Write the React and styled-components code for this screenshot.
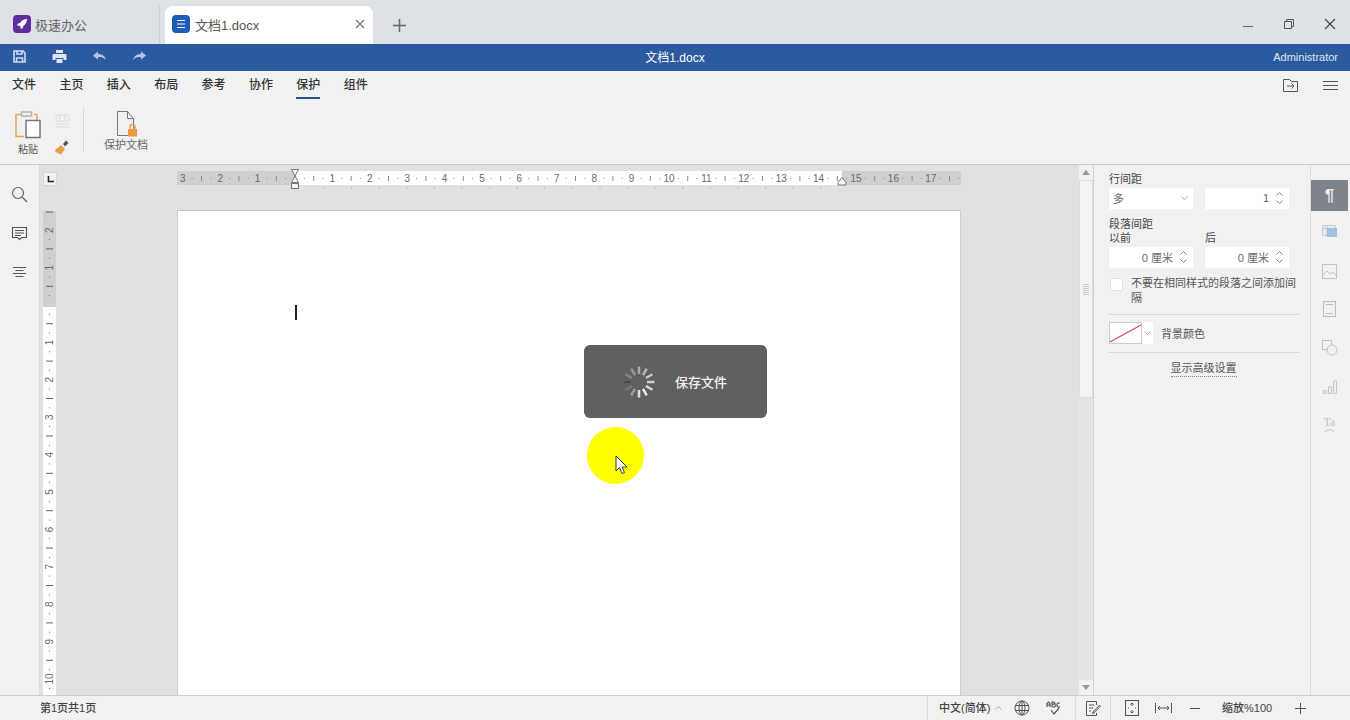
import React from "react";
import styled, { createGlobalStyle } from "styled-components";

const GlobalStyle = createGlobalStyle`
  html, body {
    margin: 0;
    padding: 0;
    overflow: hidden;
    background: #f1f1f1;
  }
  * { box-sizing: border-box; }
  body {
    font-family: "Liberation Sans", "Noto Sans CJK SC", sans-serif;
    color: #444;
  }
`;

const Screen = styled.div`
  width: 1350px;
  height: 720px;
  display: flex;
  flex-direction: column;
  overflow: hidden;
`;

/* tab strip */
const TabStrip = styled.div`
  height: 44px;
  flex: none;
  background: #dee1e6;
  display: flex;
  align-items: flex-end;
`;
const HomeTab = styled.div`
  width: 160px;
  height: 38px;
  padding: 0 0 2px 13px;
  display: flex;
  align-items: center;
  gap: 4px;
  font-size: 13px;
  color: #666;
  border-right: 1px solid #ccced2;
`;
const AppBadge = styled.div`
  width: 18px;
  height: 18px;
  border-radius: 4px;
  background: ${(p) => p.$color};
  display: flex;
  align-items: center;
  justify-content: center;
`;
const DocTab = styled.div`
  width: 208px;
  height: 38px;
  margin-left: 5px;
  padding: 0 8px 2px 7px;
  background: #fff;
  border-radius: 8px 8px 0 0;
  display: flex;
  align-items: center;
  gap: 5px;
  font-size: 13px;
  color: #555;
`;
const TabName = styled.span`
  flex: 1;
`;
const AddTab = styled.div`
  margin: 0 0 7px 20px;
  height: 24px;
  display: flex;
  align-items: center;
`;
const WindowButtons = styled.div`
  margin-left: auto;
  height: 38px;
  display: flex;
  align-items: center;
  gap: 29px;
  padding: 0 14px 2px 0;
`;

/* blue title bar */
const TitleBar = styled.div`
  height: 27px;
  flex: none;
  background: #2c5a9f;
  display: grid;
  grid-template-columns: 1fr auto 1fr;
  align-items: center;
  padding: 0 12px 2px 12px;
  color: #fff;
  font-size: 12px;
`;
const QuickTools = styled.div`
  display: flex;
  align-items: center;
  gap: 25px;
`;
const UserName = styled.div`
  justify-self: end;
  font-size: 11px;
  color: #dfe7f4;
`;

/* menu + ribbon */
const MenuRow = styled.div`
  height: 29px;
  flex: none;
  background: #f1f1f1;
  display: flex;
  align-items: flex-start;
  padding: 7px 12px 0 12px;
  gap: 23.4px;
`;
const MenuItem = styled.div`
  width: 24px;
  height: 21px;
  font-size: 12px;
  line-height: 14px;
  font-weight: 500;
  white-space: nowrap;
  color: #333;
  border-bottom: ${(p) => (p.$active ? "2px solid #2c4f86" : "none")};
`;
const MenuRight = styled.div`
  margin-left: auto;
  display: flex;
  align-items: center;
  gap: 24px;
`;
const Ribbon = styled.div`
  height: 65px;
  flex: none;
  background: #f1f1f1;
  border-bottom: 1px solid #c9c9c9;
  display: flex;
  align-items: flex-start;
  padding-top: 11px;
`;
const PasteButton = styled.div`
  width: 42px;
  margin-left: 7px;
  display: flex;
  flex-direction: column;
  align-items: center;
  gap: 4px;
  font-size: 10px;
  line-height: 14px;
  color: #555;
`;
const SmallTools = styled.div`
  width: 24px;
  margin-left: 1px;
  padding-top: 2px;
  display: flex;
  flex-direction: column;
  align-items: center;
  gap: 10px;
`;
const RibbonDivider = styled.div`
  width: 1px;
  height: 44px;
  margin: -3px 0 0 9px;
  background: #d8d8d8;
`;
const ProtectButton = styled.div`
  margin: -1px 0 0 20px;
  display: flex;
  flex-direction: column;
  align-items: center;
  font-size: 11px;
  line-height: 14px;
  color: #666;
`;

/* work area */
const Workspace = styled.div`
  flex: 1;
  min-height: 0;
  display: flex;
`;
const LeftRail = styled.div`
  width: 40px;
  flex: none;
  background: #f1f1f1;
  border-right: 1px solid #dcdcdc;
  display: flex;
  flex-direction: column;
  align-items: center;
  padding-top: 21px;
  gap: 22px;
`;
const Canvas = styled.div`
  flex: 1;
  min-width: 0;
  background: #e1e1e1;
  display: flex;
  overflow: hidden;
`;
const VerticalRulerCol = styled.div`
  width: 16px;
  flex: none;
  margin-left: 3px;
  padding-top: 7px;
`;
const RulerCorner = styled.div`
  width: 14px;
  height: 14px;
  background: #f1f1f1;
  border: 1px solid #d6d6d6;
  display: flex;
  align-items: center;
  justify-content: center;
  margin-bottom: 25px;
`;
const DocColumn = styled.div`
  margin-left: 118px;
  width: 784px;
  flex: none;
  padding-top: 3px;
`;
const PageSheet = styled.div`
  position: relative;
  margin-top: 20px;
  height: 500px;
  padding: 94px 0 0 117px;
  background: #fff;
  border-top: 1px solid #c6c6c6;
  border-left: 1px solid #cfcfcf;
  border-right: 1px solid #cfcfcf;
`;
const Caret = styled.div`
  width: 2px;
  height: 15px;
  background: #222;
`;
const SavingToast = styled.div`
  position: absolute;
  left: 406px;
  top: 134px;
  width: 183px;
  height: 73px;
  border-radius: 6px;
  background: #606060;
  display: flex;
  align-items: center;
  padding-left: 38px;
  gap: 19px;
  font-size: 13px;
  font-weight: 500;
  color: #f2f2f2;
`;
const PointerHalo = styled.div`
  position: absolute;
  left: 409px;
  top: 216px;
  width: 57px;
  height: 57px;
  border-radius: 50%;
  background: #ffff00;
`;
const PointerArrow = styled.svg`
  position: absolute;
  left: 28px;
  top: 28px;
`;

const ScrollTrack = styled.div`
  width: 16px;
  flex: none;
  background: #e4e4e4;
  border-right: 1px solid #d2d2d2;
  display: flex;
  flex-direction: column;
  align-items: center;
`;
const ScrollArrow = styled.div`
  width: 14px;
  height: 15px;
  flex: none;
  background: #f1f1f1;
  display: flex;
  align-items: center;
  justify-content: center;
`;
const ScrollThumb = styled.div`
  width: 14px;
  height: 218px;
  background: #f3f3f3;
  border: 1px solid #dcdcdc;
  display: flex;
  flex-direction: column;
  justify-content: center;
  align-items: center;
  gap: 1px;
`;
const ThumbGrip = styled.span`
  width: 6px;
  height: 1px;
  background: #c9c9c9;
`;
const ScrollGap = styled.div`
  flex: 1;
`;

/* paragraph panel */
const SidePanel = styled.div`
  width: 217px;
  flex: none;
  background: #f1f1f1;
  padding: 7px 10px 0 15px;
  font-size: 11px;
  color: #555;
  border-right: 1px solid #dcdcdc;
`;
const FieldLabel = styled.div`
  height: ${(p) => p.$h || 14}px;
  line-height: 14px;
  margin-top: ${(p) => p.$top || 0}px;
  color: #444;
`;
const FieldRow = styled.div`
  display: grid;
  grid-template-columns: 84px 84px;
  column-gap: 12px;
`;
const Field = styled.div`
  height: 21px;
  background: #fff;
  display: flex;
  align-items: center;
  justify-content: ${(p) => (p.$select ? "space-between" : "flex-end")};
  padding: ${(p) => (p.$select ? "0 5px 1px 4px" : "0 6px 1px 4px")};
  gap: 7px;
  color: #666;
`;
const Spinner = styled.div`
  display: flex;
  flex-direction: column;
  gap: 4px;
`;
const CheckRow = styled.div`
  display: flex;
  gap: 8px;
  margin-top: 8px;
  padding-left: 1px;
  line-height: 15px;
`;
const CheckBox = styled.div`
  width: 13px;
  height: 13px;
  margin-top: 2px;
  flex: none;
  border-radius: 2px;
  background: #fff;
  border: 1px solid #e2e2e2;
`;
const PanelRule = styled.div`
  height: 1px;
  margin: ${(p) => p.$m};
  background: #d8d8d8;
`;
const ColorRow = styled.div`
  display: flex;
  align-items: center;
  gap: 8px;
  color: #555;
`;
const ColorButton = styled.div`
  width: 44px;
  height: 22px;
  background: #fff;
  display: flex;
  align-items: center;
  gap: 2px;
`;
const AdvancedLink = styled.div`
  width: max-content;
  margin: 8px auto 0 auto;
  border-bottom: 1px dotted #888;
  padding-bottom: 1px;
  line-height: 14px;
  position: relative;
  left: -1px;
`;

const RightRail = styled.div`
  width: 39px;
  flex: none;
  background: #f1f1f1;
  display: flex;
  flex-direction: column;
  padding-top: 15px;
`;
const RailTab = styled.div`
  width: 37px;
  height: ${(p) => p.$h || 38}px;
  display: flex;
  flex-direction: column;
  align-items: center;
  justify-content: center;
  background: ${(p) => (p.$active ? "#7e838b" : "transparent")};
`;
const Pilcrow = styled.span`
  color: #ececec;
  font-size: 17px;
  font-weight: 700;
`;
const RailLetters = styled.span`
  color: #c4c4c4;
  font-size: 12px;
  line-height: 12px;
  font-family: "Liberation Serif", serif;
`;

/* status bar */
const StatusBar = styled.div`
  height: 25px;
  flex: none;
  background: #f1f1f1;
  border-top: 1px solid #cfcfcf;
  display: flex;
  align-items: stretch;
  font-size: 11px;
  font-weight: 500;
  color: #444;
  line-height: 22px;
`;
const PageCount = styled.div`
  margin-left: 40px;
  display: flex;
  align-items: center;
  flex: 1;
`;
const StatusGroup = styled.div`
  display: flex;
  align-items: center;
  padding: ${(p) => p.$pad};
  border-left: 1px solid #dcdcdc;
`;
const Language = styled.div`
  display: flex;
  align-items: center;
  gap: 5px;
  width: 75px;
  white-space: nowrap;
`;
const StatusGap = styled.span`
  width: ${(p) => p.$w}px;
  flex: none;
`;
const ZoomLabel = styled.span`
  width: 52px;
  white-space: nowrap;
`;

const Svg = ({ w = 16, h = 16, children, stroke = "#666", sw = 1, fill = "none" }) => (
  <svg width={w} height={h} viewBox={`0 0 ${w} ${h}`} fill={fill} stroke={stroke} strokeWidth={sw} style={{ display: "block", flex: "none" }}>
    {children}
  </svg>
);

const UNIT = 37.4;

const HorizontalRuler = () => {
  const marks = [];
  for (let i = -3; i < 18; i++) {
    const x = 118 + i * UNIT;
    if (i !== 0) {
      marks.push(
        <text key={`n${i}`} x={x} y={14} fontSize="10" textAnchor="middle" fill="#6a6a6a" fontFamily="Liberation Sans">
          {Math.abs(i)}
        </text>
      );
    }
    [0.25, 0.5, 0.75].forEach((f) => {
      const mx = x + f * UNIT;
      if (mx > 784) return;
      marks.push(
        <line key={`t${i}${f}`} x1={mx} x2={mx} y1={f === 0.5 ? 8 : 10} y2={f === 0.5 ? 13 : 11} stroke="#8a8a8a" />
      );
    });
  }
  // default tab stops under the ruler
  for (let t = 147; t < 660; t += 27.6) {
    marks.push(<line key={`s${t}`} x1={t} x2={t} y1={18} y2={21} stroke="#c4c4c4" />);
  }
  return (
    <svg width="784" height="22" style={{ display: "block", overflow: "visible" }}>
      <rect x="0" y="3" width="784" height="14" fill="#cfcfcf" />
      <rect x="118" y="3" width="547" height="14" fill="#fff" />
      {marks}
      <path d="M114.500 1.500h7l-3.500 6.500zM114.500 14.500l3.500-6.500 3.500 6.500z" fill="#f5f5f5" stroke="#777" />
      <rect x="114.500" y="15.500" width="7" height="5" fill="#f5f5f5" stroke="#777" />
      <path d="M661 14.500l4-5 4 5v2.500h-8z" fill="#f5f5f5" stroke="#777" />
    </svg>
  );
};

const VerticalRuler = () => {
  const marks = [];
  for (let i = -2; i <= 10; i++) {
    const y = 94 + i * UNIT;
    if (i !== 0) {
      marks.push(
        <text key={`n${i}`} transform={`translate(10 ${y}) rotate(-90)`} fontSize="10" textAnchor="middle" fill="#6a6a6a" fontFamily="Liberation Sans">
          {Math.abs(i)}
        </text>
      );
    }
    [0.25, 0.5, 0.75].forEach((f) => {
      const my = y + f * UNIT;
      marks.push(
        <line key={`t${i}${f}`} x1={f === 0.5 ? 3 : 6} x2={f === 0.5 ? 10 : 7} y1={my} y2={my} stroke="#666" />
      );
    });
  }
  marks.push(<line key="top" x1="3" x2="10" y1="1" y2="1" stroke="#666" />);
  return (
    <svg width="13" height="490" style={{ display: "block" }}>
      <rect width="13" height="490" fill="#fff" />
      <rect width="13" height="96" fill="#cfcfcf" />
      {marks}
    </svg>
  );
};

const LoadingWheel = () => {
  const rays = [];
  const shades = [0.12, 0.25, 0.4, 0.5, 0.6, 0.7, 0.78, 0.85, 0.95, 0.9, 0.45, 0.15];
  for (let i = 0; i < 12; i++) {
    const a = Math.PI + (i * Math.PI) / 6;
    rays.push(
      <line
        key={i}
        x1={17 + Math.cos(a) * 8}
        y1={17 + Math.sin(a) * 8}
        x2={17 + Math.cos(a) * 15.500}
        y2={17 + Math.sin(a) * 15.500}
        stroke={i === 0 ? "#444" : "#f0f0f0"}
        strokeOpacity={i === 0 ? 0.7 : shades[i]}
        strokeWidth="2.500"
      />
    );
  }
  return <Svg w={34} h={34} stroke="none">{rays}</Svg>;
};

const ChevUp = () => (
  <Svg w={7} h={4} stroke="#888"><path d="M.5 3.500L3.500.5l3 3" /></Svg>
);
const ChevDown = ({ color = "#888" }) => (
  <Svg w={7} h={4} stroke={color}><path d="M.5.5l3 3 3-3" /></Svg>
);

const SpinField = ({ value }) => (
  <Field>
    {value}
    <Spinner>
      <ChevUp />
      <ChevDown />
    </Spinner>
  </Field>
);

const menus = ["文件", "主页", "插入", "布局", "参考", "协作", "保护", "组件"];

const App = () => {
  return (
    <Screen>
      <GlobalStyle />
      <TabStrip>
        <HomeTab>
          <AppBadge $color="#5b2d9e">
            <Svg w={12} h={12} stroke="none" fill="#fff">
              <path d="M11 1C8 1 5.500 2.500 4 5L2 5.500 1 7.500l2.500.2 1 1 .3 2.300 2-1 .5-2C9.500 6.500 11 4 11 1z" />
            </Svg>
          </AppBadge>
          极速办公
        </HomeTab>
        <DocTab>
          <AppBadge $color="#1f5bb8">
            <Svg w={12} h={12} stroke="#fff" sw={1.2}>
              <path d="M2 2.500h8M2 6h8M2 9.500h8" />
            </Svg>
          </AppBadge>
          <TabName>文档1.docx</TabName>
          <Svg w={10} h={10} stroke="#777" sw={1.2}><path d="M1 1l8 8M9 1l-8 8" /></Svg>
        </DocTab>
        <AddTab>
          <Svg w={13} h={13} stroke="#666" sw={1.5}><path d="M6.500 0v13M0 6.500h13" /></Svg>
        </AddTab>
        <WindowButtons>
          <Svg w={12} h={12} stroke="#666"><path d="M1 8.500h10" /></Svg>
          <Svg w={12} h={12} stroke="#555"><path d="M1.500 3.500h7v7h-7zM3.500 3.500v-2h7v7h-2" /></Svg>
          <Svg w={12} h={12} stroke="#444" sw={1.2}><path d="M1 1l10 10M11 1L1 11" /></Svg>
        </WindowButtons>
      </TabStrip>

      <TitleBar>
        <QuickTools>
          <Svg w={15} h={15} stroke="#cfdcf0" sw={1.6}><path d="M2 2h9l2 2v9H2zM5 2v3h5V2M4.500 13V9h6v4" /></Svg>
          <Svg w={15} h={15} stroke="none" fill="#dfe7f4"><path d="M4 1h7v3H4zM1.500 5h12a1 1 0 011 1v5h-3V9h-8v2h-3V6a1 1 0 011-1zM4.500 10h6v4h-6z" /></Svg>
          <Svg w={15} h={15} stroke="none" fill="#b4c8e6"><path d="M1 6.500L6 2.500v2.500c4 0 7 2 8 6-2-2.500-4.500-3-8-3v2.500z" /></Svg>
          <Svg w={15} h={15} stroke="none" fill="#b4c8e6"><path d="M14 6.500L9 2.500v2.500c-4 0-7 2-8 6 2-2.500 4.500-3 8-3v2.500z" /></Svg>
        </QuickTools>
        <div>文档1.docx</div>
        <UserName>Administrator</UserName>
      </TitleBar>

      <MenuRow>
        {menus.map((m) => (
          <MenuItem key={m} $active={m === "保护"}>{m}</MenuItem>
        ))}
        <MenuRight>
          <Svg w={17} h={15} stroke="#555"><path d="M1.500 13.500v-12h6l2 2h6v10zM5 8h7M9.500 5.500L12 8l-2.500 2.500" /></Svg>
          <Svg w={15} h={15} stroke="#555"><path d="M0 3.500h15M0 7.500h15M0 11.500h15" /></Svg>
        </MenuRight>
      </MenuRow>

      <Ribbon>
        <PasteButton>
          <Svg w={27} h={28} stroke="#e9a45c" sw={1.5}>
            <path d="M9 3.500H1v22h8" />
            <path d="M19 3.500h3V9" />
            <rect x="6.500" y="1" width="10" height="4" fill="#f1f1f1" stroke="#b5b5b5" />
            <rect x="11" y="9.500" width="14" height="17" fill="#fff" stroke="#777" />
          </Svg>
          粘贴
        </PasteButton>
        <SmallTools>
          <Svg w={17} h={16} stroke="#dcdcdc"><path d="M2 2h13v6H2zM2 11h13M2 14h13M6 2v6M11 2v6" /></Svg>
          <Svg w={16} h={16} stroke="none" fill="#e3a04e">
            <path d="M1 11l6-5 4 4-4 5.500c-2-.5-3-1-3.500-2.500L2 14z" />
            <path d="M9 5l3-3.500 2.500 2.500L11 7.500z" fill="#555" />
          </Svg>
        </SmallTools>
        <RibbonDivider />
        <ProtectButton>
          <Svg w={24} h={28} stroke="#777">
            <path d="M3.500 1.500h10l6 7v17h-16z" />
            <path d="M13.500 1.500v7h6" />
            <rect x="14" y="19" width="9" height="7.500" fill="#ee9a45" stroke="none" />
            <path d="M16 19v-2a2.500 2.500 0 015 0v2" stroke="#ee9a45" strokeWidth="1.500" />
          </Svg>
          保护文档
        </ProtectButton>
      </Ribbon>

      <Workspace>
        <LeftRail>
          <Svg w={17} h={17} stroke="#666" sw={1.2}><circle cx="7" cy="7" r="5.500" /><path d="M11 11l5 5" /></Svg>
          <Svg w={17} h={17} stroke="#555" sw={1.1}><path d="M1.500 2.500h14v10h-5l-2 2-2-2h-5zM4 5.500h9M4 8h9M4 10.500h6" /></Svg>
          <Svg w={17} h={17} stroke="#555"><path d="M2 3.500h13M4.500 6.500h8M2 9.500h13M4.500 12.500h8" /></Svg>
        </LeftRail>

        <Canvas>
          <VerticalRulerCol>
            <RulerCorner>
              <Svg w={7} h={7} stroke="#222" sw={1.6}><path d="M1.500 0v5.500H7" /></Svg>
            </RulerCorner>
            <VerticalRuler />
          </VerticalRulerCol>
          <DocColumn>
            <HorizontalRuler />
            <PageSheet>
              <Caret />
              <SavingToast>
                <LoadingWheel />
                保存文件
              </SavingToast>
              <PointerHalo>
                <PointerArrow width="13" height="20" viewBox="0 0 13 20">
                  <path d="M1 1v15l3.500-3.500 2.500 6 2.500-1-2.500-5.500h5z" fill="#fff" stroke="#333" strokeWidth="1" />
                </PointerArrow>
              </PointerHalo>
            </PageSheet>
          </DocColumn>
        </Canvas>

        <ScrollTrack>
          <ScrollArrow><Svg w={8} h={5} stroke="none" fill="#999"><path d="M0 5l4-5 4 5z" /></Svg></ScrollArrow>
          <ScrollThumb>
            <ThumbGrip /><ThumbGrip /><ThumbGrip /><ThumbGrip /><ThumbGrip /><ThumbGrip />
          </ScrollThumb>
          <ScrollGap />
          <ScrollArrow><Svg w={8} h={5} stroke="none" fill="#999"><path d="M0 0l4 5 4-5z" /></Svg></ScrollArrow>
        </ScrollTrack>

        <SidePanel>
          <FieldLabel $h={16}>行间距</FieldLabel>
          <FieldRow>
            <Field $select>
              多
              <ChevDown color="#aaa" />
            </Field>
            <SpinField value="1" />
          </FieldRow>
          <FieldLabel $top={8}>段落间距</FieldLabel>
          <FieldRow>
            <FieldLabel $h={16}>以前</FieldLabel>
            <FieldLabel $h={16}>后</FieldLabel>
          </FieldRow>
          <FieldRow>
            <SpinField value="0 厘米" />
            <SpinField value="0 厘米" />
          </FieldRow>
          <CheckRow>
            <CheckBox />
            <span>不要在相同样式的段落之间添加间隔</span>
          </CheckRow>
          <PanelRule $m="8px 0 7px -1px" />
          <ColorRow>
            <ColorButton>
              <Svg w={33} h={22} stroke="#ccc">
                <rect x=".5" y=".5" width="32" height="21" fill="#fff" />
                <path d="M1 20L32 3" stroke="#d8486a" strokeWidth="1.300" />
              </Svg>
              <ChevDown color="#aaa" />
            </ColorButton>
            背景颜色
          </ColorRow>
          <PanelRule $m="8px 0 0 -1px" />
          <AdvancedLink>显示高级设置</AdvancedLink>
        </SidePanel>

        <RightRail>
          <RailTab $active $h={31}>
            <Pilcrow>¶</Pilcrow>
          </RailTab>
          <RailTab $h={41}>
            <Svg w={17} h={17} stroke="#c8ccd2" fill="#e8ecf0"><path d="M1.500 2.500h13v10h-13zM1.500 5.500h13M6 2.500v10" /><rect x="6" y="5" width="10" height="9" fill="#a3c0e2" stroke="none" /></Svg>
          </RailTab>
          <RailTab>
            <Svg w={15} h={15} stroke="#c4c4c4"><rect x=".5" y=".5" width="14" height="14" /><path d="M1 11l4-4 3 3 2-2 4 3" /></Svg>
          </RailTab>
          <RailTab>
            <Svg w={13} h={16} stroke="#bdbdbd"><rect x=".5" y=".5" width="12" height="15" /><path d="M3 3.500h7M3 12.500h7" /></Svg>
          </RailTab>
          <RailTab $h={39}>
            <Svg w={16} h={16} stroke="#c4c4c4"><rect x=".5" y=".5" width="9" height="9" /><circle cx="10" cy="10" r="5" fill="#f1f1f1" /></Svg>
          </RailTab>
          <RailTab $h={39}>
            <Svg w={16} h={16} stroke="#c4c4c4"><path d="M1.500 11.500h3v3h-3zM6.500 8v6.500h3V8zM11.500 2v12.500h3V2z" /></Svg>
          </RailTab>
          <RailTab $h={36}>
            <RailLetters>Ta</RailLetters>
            <Svg w={11} h={5} stroke="#c4c4c4"><path d="M1 4c2-3 7-3 9 0" /></Svg>
          </RailTab>
        </RightRail>
      </Workspace>

      <StatusBar>
        <PageCount>第1页共1页</PageCount>
        <StatusGroup $pad="0 14px 0 11px">
          <Language>
            中文(简体)
            <Svg w={7} h={4} stroke="#aaa"><path d="M.5 3.500L3.500.5l3 3" /></Svg>
          </Language>
          <Svg w={16} h={16} stroke="#555">
            <circle cx="8" cy="8" r="7" />
            <ellipse cx="8" cy="8" rx="3" ry="7" />
            <path d="M1 5.500h14M1 10.500h14M8 1v14" />
          </Svg>
          <StatusGap $w={16} />
          <Svg w={15} h={15} stroke="#555" sw={1.2}><path d="M1 6V2.500L2.500 1 4 2.500V6M1 4h3M6 6V1h2l1 1.200-1 1H6M9 3.500l.5 1-.8 1.500H6M14 2h-2l-1 1v2l1 1h2M5 9l3 4 5-6" /></Svg>
        </StatusGroup>
        <StatusGroup $pad="0 9px 0 9px">
          <Svg w={16} h={17} stroke="#555"><path d="M11.500 5V1.500h-10v14h10V13M4 5h5M4 8h4M4 11h2M8 12l6.500-7 1 1-6.500 7-1.500.5z" /></Svg>
        </StatusGroup>
        <StatusGroup $pad="0 44px 0 14px">
          <Svg w={14} h={16} stroke="#555"><rect x=".5" y=".5" width="13" height="15" /><path d="M7 3v3M5.500 4.500L7 3l1.500 1.500M7 13v-3M5.500 11.500L7 13l1.500-1.500M3 8h1M10 8h1" /></Svg>
          <StatusGap $w={16} />
          <Svg w={17} h={12} stroke="#555"><path d="M.5 1v10M16.500 1v10M3 6h11M5 4L3 6l2 2M12 4l2 2-2 2" /></Svg>
          <StatusGap $w={18} />
          <Svg w={10} h={10} stroke="#555"><path d="M0 5.500h10" /></Svg>
          <StatusGap $w={22} />
          <ZoomLabel>缩放%100</ZoomLabel>
          <StatusGap $w={21} />
          <Svg w={11} h={11} stroke="#555"><path d="M5.500 0v11M0 5.500h11" /></Svg>
        </StatusGroup>
      </StatusBar>
    </Screen>
  );
};

export default App;
